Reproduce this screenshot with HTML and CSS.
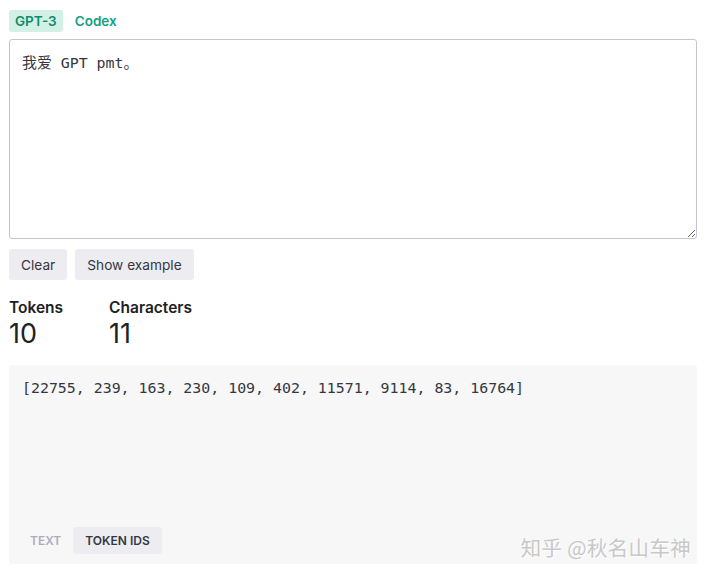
FILE: index.html
```html
<!DOCTYPE html>
<html lang="zh">
<head>
  <meta charset="UTF-8">
  <title>Tokenizer</title>
  <link rel="stylesheet" href="styles.css">
</head>
<body>
  <div class="container">
    <div class="models">
      <span class="model active">GPT-3</span>
      <span class="model">Codex</span>
    </div>

    <textarea class="input" spellcheck="false">我爱 GPT pmt。</textarea>

    <div class="actions">
      <button class="btn">Clear</button>
      <button class="btn">Show example</button>
    </div>

    <div class="stats">
      <div class="stat">
        <div class="stat-label">Tokens</div>
        <div class="stat-value">10</div>
      </div>
      <div class="stat">
        <div class="stat-label">Characters</div>
        <div class="stat-value">11</div>
      </div>
    </div>

    <div class="output">
      <div class="output-text">[22755, 239, 163, 230, 109, 402, 11571, 9114, 83, 16764]</div>
      <div class="tabs">
        <span class="tab">TEXT</span>
        <span class="tab active">TOKEN IDS</span>
      </div>
      <div class="watermark">知乎 @秋名山车神</div>
    </div>
  </div>
</body>
</html>
```

FILE: styles.css
```css
:root {
  --green: #10a37f;
  --green-dark: #0f8a6b;
  --green-light: #d2f0e5;
  --text: #202123;
  --btn-bg: #ececf1;
  --btn-text: #353740;
  --out-bg: #f7f7f8;
}

body {
  font-family: Inter, "Noto Sans", "Noto Sans CJK SC", sans-serif;
  margin: 0;
  padding: 10px 12px 10px 9px;
  background: #fff;
  color: var(--text);
}

.models {
  display: flex;
  gap: 4px;
  margin-bottom: 7px;
}

.model {
  font-size: 13.5px;
  font-weight: 600;
  color: var(--green);
  padding: 0 8px;
  height: 22px;
  line-height: 22px;
  border-radius: 3px;
}

.model.active {
  background: var(--green-light);
  color: var(--green-dark);
  padding: 0 6px;
}

.input {
  display: block;
  box-sizing: border-box;
  width: 100%;
  height: 200px;
  margin: 0;
  padding: 13px 12px;
  border: 1px solid #c5c5d2;
  border-radius: 3px;
  font-family: "DejaVu Sans Mono", "Noto Sans CJK SC", monospace;
  font-size: 14.9px;
  line-height: 20px;
  color: #353740;
  resize: vertical;
}

.actions {
  display: flex;
  gap: 8px;
  margin-top: 10px;
}

.btn {
  font-family: Inter, sans-serif;
  font-size: 13.7px;
  color: var(--btn-text);
  background: var(--btn-bg);
  border: none;
  border-radius: 3px;
  height: 31px;
  padding: 0 12px;
}

.stats {
  display: flex;
  gap: 46px;
  margin-top: 18px;
}

.stat-label {
  font-size: 15.5px;
  font-weight: 600;
  line-height: 20px;
}

.stat-value {
  font-size: 27px;
  line-height: 32px;
  font-weight: 400;
}

.output {
  position: relative;
  margin-top: 15px;
  height: 199px;
  background: var(--out-bg);
  border-radius: 3px;
  padding: 13px 13px 12px;
  box-sizing: border-box;
  display: flex;
  flex-direction: column;
  justify-content: space-between;
}

.output-text {
  font-family: "DejaVu Sans Mono", monospace;
  font-size: 14.9px;
  line-height: 20px;
  color: #353740;
}

.tabs {
  display: flex;
  gap: 4px;
  padding-left: 0;
  margin-bottom: -2px;
}

.tab {
  font-size: 12px;
  font-weight: 600;
  color: #acacbe;
  height: 27px;
  line-height: 27px;
  padding: 0 8px;
  border-radius: 3px;
}

.tab.active {
  background: var(--btn-bg);
  color: var(--btn-text);
  padding: 0 12px;
}

.watermark {
  position: absolute;
  right: 6px;
  bottom: 2px;
  font-family: "Noto Sans CJK SC", sans-serif;
  font-size: 20.5px;
  color: #c8c8c8;
  text-shadow: 1px 1px 0 #fff;
  letter-spacing: 0.3px;
}
```
